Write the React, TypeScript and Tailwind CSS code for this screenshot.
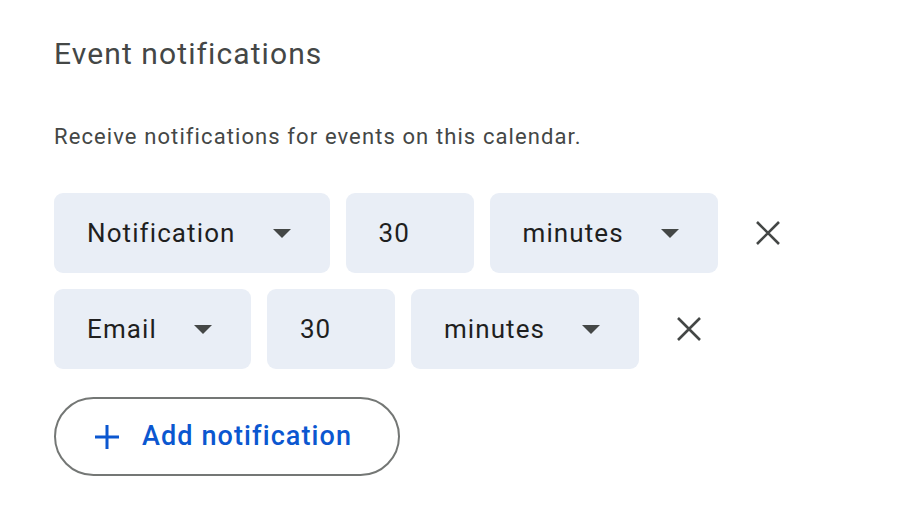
import React from "react";

const font = { fontFamily: "Roboto, 'Noto Sans', sans-serif" };

function Caret() {
  return (
    <svg width="18" height="9" viewBox="0 0 18 9" className="shrink-0">
      <path d="M0 0h18L9 9z" fill="#444746" />
    </svg>
  );
}

function Select({ label }: { label: string }) {
  return (
    <div className="flex h-[80px] items-center gap-[37px] rounded-[9px] bg-[#e9eef6] pl-[33px] pr-[39px] text-[26px] tracking-[1.1px] text-[#1f1f1f]">
      <span>{label}</span>
      <Caret />
    </div>
  );
}

function NumberBox({ value }: { value: string }) {
  return (
    <div className="flex h-[80px] w-[128px] items-center rounded-[9px] bg-[#e9eef6] pl-[33px] text-[26px] tracking-[1.1px] text-[#1f1f1f]">
      {value}
    </div>
  );
}

function RemoveButton() {
  return (
    <button className="ml-[10px] grid h-[48px] w-[48px] place-items-center">
      <svg width="26" height="26" viewBox="0 0 26 26">
        <path d="M2 2L24 24M24 2L2 24" stroke="#444746" strokeWidth="2.6" />
      </svg>
    </button>
  );
}

function Row({ kind }: { kind: string }) {
  return (
    <div className="flex items-center gap-[16px]">
      <Select label={kind} />
      <NumberBox value="30" />
      <Select label="minutes" />
      <RemoveButton />
    </div>
  );
}

export default function App() {
  return (
    <div className="min-h-screen bg-white pl-[54px] pt-[36px]" style={font}>
      <h2 className="text-[30px] leading-[36px] tracking-[1.1px] text-[#444746]">Event notifications</h2>
      <p className="mt-[51px] text-[22px] leading-[28px] tracking-[1.1px] text-[#444746]">
        Receive notifications for events on this calendar.
      </p>

      <div className="mt-[42px] flex flex-col gap-[16px]">
        <Row kind="Notification" />
        <Row kind="Email" />
      </div>

      <button className="mt-[28px] flex h-[79px] w-[346px] items-center gap-[22px] rounded-full border-2 border-[#747775] pl-[38px] text-[27px] font-medium tracking-[1.1px] text-[#0b57d0]">
        <svg width="26" height="26" viewBox="0 0 26 26">
          <path d="M13 1v24M1 13h24" stroke="#0b57d0" strokeWidth="3" />
        </svg>
        <span>Add notification</span>
      </button>
    </div>
  );
}
